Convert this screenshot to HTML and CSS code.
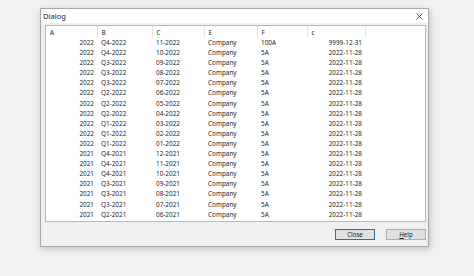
FILE: index.html
```html
<!DOCTYPE html>
<html>
<head>
<meta charset="utf-8">
<link rel="stylesheet" href="styles.css">
</head>
<body>
<div class="dialog">
  <div class="titlebar">
    <span class="title">Dialog</span>
    <svg class="closex" width="7" height="7" viewBox="0 0 7 7"><path d="M0.5 0.5 L6.5 6.5 M6.5 0.5 L0.5 6.5" stroke="#333" stroke-width="0.8" fill="none"/></svg>
  </div>
  <div class="body">
    <div class="panel">
      <table class="grid">
        <colgroup>
          <col class="ca"><col class="cb"><col class="cc"><col class="ce"><col class="cf"><col class="cg"><col>
        </colgroup>
        <thead>
          <tr><th>A</th><th>B</th><th>C</th><th>E</th><th>F</th><th>c</th><th class="last"></th></tr>
        </thead>
        <tbody>
          <tr><td class="r">2022</td><td>Q4-2022</td><td>11-2022</td><td>Company</td><td>100A</td><td class="r">9999-12-31</td><td class="last"></td></tr>
          <tr><td class="r">2022</td><td>Q4-2022</td><td>10-2022</td><td>Company</td><td>5A</td><td class="r">2022-11-28</td><td class="last"></td></tr>
          <tr><td class="r">2022</td><td>Q3-2022</td><td>09-2022</td><td>Company</td><td>5A</td><td class="r">2022-11-28</td><td class="last"></td></tr>
          <tr><td class="r">2022</td><td>Q3-2022</td><td>08-2022</td><td>Company</td><td>5A</td><td class="r">2022-11-28</td><td class="last"></td></tr>
          <tr><td class="r">2022</td><td>Q3-2022</td><td>07-2022</td><td>Company</td><td>5A</td><td class="r">2022-11-28</td><td class="last"></td></tr>
          <tr><td class="r">2022</td><td>Q2-2022</td><td>06-2022</td><td>Company</td><td>5A</td><td class="r">2022-11-28</td><td class="last"></td></tr>
          <tr><td class="r">2022</td><td>Q2-2022</td><td>05-2022</td><td>Company</td><td>5A</td><td class="r">2022-11-28</td><td class="last"></td></tr>
          <tr><td class="r">2022</td><td>Q2-2022</td><td>04-2022</td><td>Company</td><td>5A</td><td class="r">2022-11-28</td><td class="last"></td></tr>
          <tr><td class="r">2022</td><td>Q1-2022</td><td>03-2022</td><td>Company</td><td>5A</td><td class="r">2022-11-28</td><td class="last"></td></tr>
          <tr><td class="r">2022</td><td>Q1-2022</td><td>02-2022</td><td>Company</td><td>5A</td><td class="r">2022-11-28</td><td class="last"></td></tr>
          <tr><td class="r">2022</td><td>Q1-2022</td><td>01-2022</td><td>Company</td><td>5A</td><td class="r">2022-11-28</td><td class="last"></td></tr>
          <tr><td class="r">2021</td><td>Q4-2021</td><td>12-2021</td><td>Company</td><td>5A</td><td class="r">2022-11-28</td><td class="last"></td></tr>
          <tr><td class="r">2021</td><td>Q4-2021</td><td>11-2021</td><td>Company</td><td>5A</td><td class="r">2022-11-28</td><td class="last"></td></tr>
          <tr><td class="r">2021</td><td>Q4-2021</td><td>10-2021</td><td>Company</td><td>5A</td><td class="r">2022-11-28</td><td class="last"></td></tr>
          <tr><td class="r">2021</td><td>Q3-2021</td><td>09-2021</td><td>Company</td><td>5A</td><td class="r">2022-11-28</td><td class="last"></td></tr>
          <tr><td class="r">2021</td><td>Q3-2021</td><td>08-2021</td><td>Company</td><td>5A</td><td class="r">2022-11-28</td><td class="last"></td></tr>
          <tr><td class="r">2021</td><td>Q3-2021</td><td>07-2021</td><td>Company</td><td>5A</td><td class="r">2022-11-28</td><td class="last"></td></tr>
          <tr><td class="r">2021</td><td>Q2-2021</td><td>06-2021</td><td>Company</td><td>5A</td><td class="r">2022-11-28</td><td class="last"></td></tr>
        </tbody>
      </table>
    </div>
    <div class="footer">
      <button class="btn default">Close</button>
      <button class="btn"><u>H</u>elp</button>
    </div>
  </div>
</div>
</body>
</html>
```
FILE: styles.css
```css
html, body {
  margin: 0;
  padding: 0;
}
body {
  background: #f1f1f1;
  width: 474px;
  height: 276px;
  overflow: hidden;
  font-family: "Noto Sans", "Liberation Sans", sans-serif;
  padding-top: 8px;
  padding-left: 40px;
  box-sizing: border-box;
}
.dialog {
  width: 389px;
  height: 239px;
  box-sizing: border-box;
  border: 1px solid #a9a9a9;
  background: #f0f0f0;
  box-shadow: 1px 2px 6px rgba(0,0,0,0.22);
  display: flex;
  flex-direction: column;
}
.titlebar {
  height: 14px;
  background: #ffffff;
  display: flex;
  align-items: center;
  justify-content: space-between;
  padding: 0 5px 0 2px;
  flex: none;
}
.title {
  font-size: 7.6px;
  color: #222;
}
.closex {
  display: block;
}
.body {
  flex: 1;
  display: flex;
  flex-direction: column;
  padding: 2px 2px 0 4px;
}
.panel {
  height: 197px;
  background: #ffffff;
  border: 1px solid #b9b9b9;
  box-sizing: border-box;
  overflow: hidden;
}
.grid {
  border-collapse: collapse;
  table-layout: fixed;
  width: 100%;
  font-size: 6.4px;
  color: #262626;
}
.ca { width: 51px; }
.cb { width: 55px; }
.cc { width: 52px; }
.ce { width: 53px; }
.cf { width: 50px; }
.cg { width: 58px; }
.grid th {
  height: 12px;
  font-weight: normal;
  text-align: left;
  padding: 0 0 0 4px;
  border-right: 1px solid #e5e5e5;
  box-sizing: border-box;
}
.grid th.last, .grid td.last {
  border-right: none;
}
.grid td {
  height: 10.1px;
  padding: 0 0 0 4px;
  white-space: nowrap;
  line-height: 10.1px;
}
.grid td.r {
  text-align: right;
  padding: 0 3px 0 0;
}
.footer {
  flex: 1;
  display: flex;
  justify-content: flex-end;
  align-items: center;
  gap: 11px;
  padding-top: 1px;
}
.btn {
  width: 40px;
  height: 11px;
  font-family: "Noto Sans", "Liberation Sans", sans-serif;
  font-size: 6.2px;
  color: #222;
  background: #e1e1e1;
  border: 1px solid #adadad;
  padding: 0;
  margin: 0;
  line-height: 9px;
}
.btn.default {
  border: 1.5px solid #2a6fb0;
}
```
